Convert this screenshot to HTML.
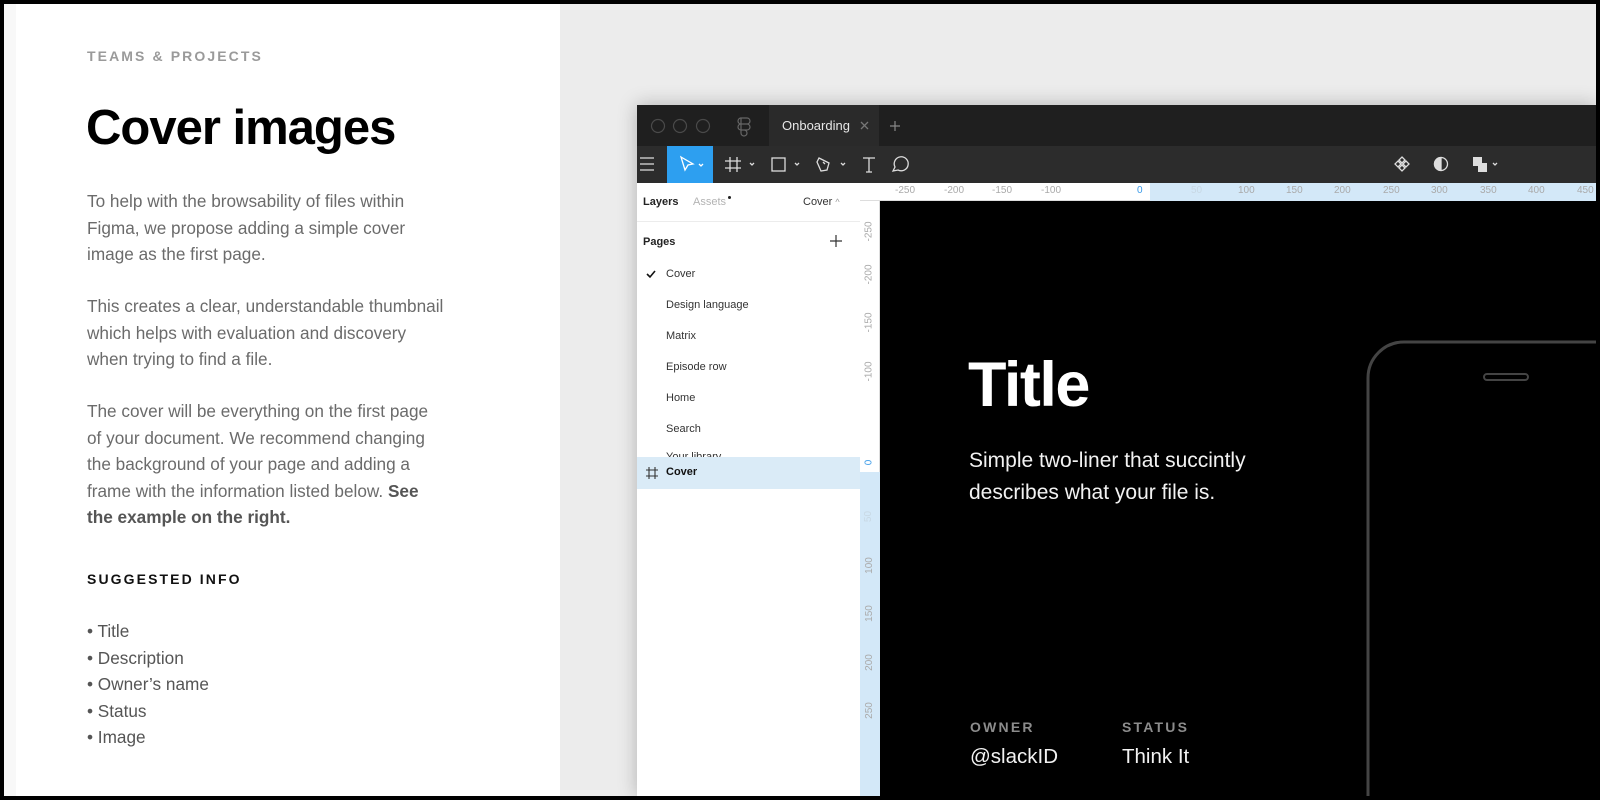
<!DOCTYPE html>
<html><head><meta charset="utf-8"><style>
*{margin:0;padding:0;box-sizing:border-box}
body{width:1600px;height:800px;background:#000;position:relative;overflow:hidden;font-family:"Liberation Sans",sans-serif}
.abs{position:absolute;white-space:nowrap}
#left{position:absolute;left:4px;top:4px;width:556px;height:792px;background:#fff}
#right{position:absolute;left:560px;top:4px;width:1036px;height:792px;background:#ececec}
.p{position:absolute;left:87px;font-size:17.2px;color:#6b6b6b;line-height:26.5px;width:440px}
.b{font-size:17.2px;color:#555}
.win{position:absolute;left:637px;top:105px;width:959px;height:691px;background:#000;box-shadow:0 0 18px rgba(0,0,0,.25)}
.pg{position:absolute;left:666px;font-size:11px;color:#333}
.rl{position:absolute;font-size:10px;color:#aaa}
.rv{position:absolute;font-size:10px;color:#aaa;transform:rotate(-90deg);transform-origin:center}
</style></head><body>
<div id="left"><div style="position:absolute;left:0;top:0;width:12px;height:792px;background:#f8f8f8"></div></div>
<div id="right"></div>

<div class="abs" style="left:87px;top:48px;font-size:14px;font-weight:bold;color:#9a9a9a;letter-spacing:2.1px">TEAMS &amp; PROJECTS</div>
<div class="abs" style="left:86px;top:100px;font-size:49px;font-weight:bold;color:#000;letter-spacing:-1px">Cover images</div>
<div class="p" style="top:188px">To help with the browsability of files within<br>Figma, we propose adding a simple cover<br>image as the first page.</div>
<div class="p" style="top:293px">This creates a clear, understandable thumbnail<br>which helps with evaluation and discovery<br>when trying to find a file.</div>
<div class="p" style="top:398px">The cover will be everything on the first page<br>of your document. We recommend changing<br>the background of your page and adding a<br>frame with the information listed below. <b style="color:#555">See<br>the example on the right.</b></div>
<div class="abs" style="left:87px;top:571px;font-size:14px;font-weight:bold;color:#111;letter-spacing:2.1px">SUGGESTED INFO</div>
<div class="p b" style="top:618px">• Title<br>• Description<br>• Owner’s name<br>• Status<br>• Image</div>

<div class="win">
  <div style="position:absolute;left:0;top:0;width:959px;height:41px;background:#1f1f1f"></div>
  <div style="position:absolute;left:132px;top:0;width:110px;height:41px;background:#2a2a2a"></div>
  <svg style="position:absolute;left:0;top:0" width="280" height="41">
    <g fill="none" stroke="#4a4a4a" stroke-width="1.2"><circle cx="21" cy="21" r="6.5"/><circle cx="43" cy="21" r="6.5"/><circle cx="66" cy="21" r="6.5"/></g>
    <g fill="none" stroke="#666" stroke-width="1.2"><path d="M104 13h6a3 3 0 0 1 0 6h-6zM104 19h6a3 3 0 0 1 0 6h-6zM104 25h3a3 3 0 1 1-3 3zM110 19a3 3 0 1 1 0 6"/><path d="M104 13h0a3 3 0 0 0 0 6a3 3 0 0 0 0 6"/></g>
    <path d="M224 17l7 7M231 17l-7 7" stroke="#777" stroke-width="1.3"/>
    <path d="M258 16v10M253 21h10" stroke="#888" stroke-width="1.2"/>
  </svg>
  <div class="abs" style="left:145px;top:13px;font-size:13px;color:#e6e6e6">Onboarding</div>
  <div style="position:absolute;left:0;top:41px;width:959px;height:37px;background:#2c2c2c"></div>
  <div style="position:absolute;left:30px;top:41px;width:46px;height:37px;background:#2d9ff0"></div>
  <svg style="position:absolute;left:0;top:41px" width="959" height="37" fill="none" stroke="#ddd" stroke-width="1.3">
    <path d="M3 12h14M3 18h14M3 24h14"/>
    <path d="M44 11l12 7-5 1-3 5z" stroke="#fff"/><path d="M62 18l2 2 2-2" stroke="#fff"/>
    <path d="M93 11v15M100 11v15M88 15h16M88 22h16"/><path d="M113 17l2 2 2-2"/>
    <rect x="135" y="12" width="13" height="13"/><path d="M158 17l2 2 2-2"/>
    <path d="M182 12l10 5-2 7-6 1-4-9z M186 16l2 2"/><path d="M204 17l2 2 2-2"/>
    <path d="M226 12h12M232 12v14M229 26h6"/>
    <path d="M256 25l2-4a7 7 0 1 1 3 3z"/>
    <g transform="translate(765 18)"><path d="M0-7l3 3-3 3-3-3zM0 1l3 3-3 3-3-3zM-4-3l3 3-3 3-3-3zM4-3l3 3-3 3-3-3z"/></g>
    <circle cx="804" cy="18" r="6.5"/><path d="M804 11.5a6.5 6.5 0 0 0 0 13z" fill="#ddd"/>
    <path d="M836 11h9v6h5v9h-9v-6h-5z" fill="#ddd" stroke="none"/><path d="M856 17l2 2 2-2"/>
  </svg>
  <div style="position:absolute;left:0;top:78px;width:223px;height:613px;background:#fff"></div>
  <div style="position:absolute;left:0;top:116px;width:223px;height:1px;background:#ececec"></div>
  <div class="abs" style="left:6px;top:91px;font-size:11px;font-weight:bold;color:#222">Layers</div>
  <div class="abs" style="left:56px;top:91px;font-size:11px;color:#b3b3b3">Assets</div>
  <div style="position:absolute;left:91px;top:91px;width:3px;height:3px;border-radius:50%;background:#222"></div>
  <div class="abs" style="left:166px;top:91px;font-size:11px;color:#333">Cover <span style="color:#999;font-size:9px">^</span></div>
  <div class="abs" style="left:6px;top:131px;font-size:11px;font-weight:bold;color:#222">Pages</div>
  <svg style="position:absolute;left:192px;top:129px" width="14" height="14"><path d="M7 1v12M1 7h12" stroke="#333" stroke-width="1.2"/></svg>
  <svg style="position:absolute;left:9px;top:164px" width="10" height="10"><path d="M1 5l3 3 5-6" stroke="#111" stroke-width="1.6" fill="none"/></svg>
  <div class="pg" style="left:29px;top:163px">Cover</div>
  <div class="pg" style="left:29px;top:194px">Design language</div>
  <div class="pg" style="left:29px;top:225px">Matrix</div>
  <div class="pg" style="left:29px;top:256px">Episode row</div>
  <div class="pg" style="left:29px;top:287px">Home</div>
  <div class="pg" style="left:29px;top:318px">Search</div>
  <div style="position:absolute;left:29px;top:346px;height:6px;overflow:hidden;font-size:11px;color:#333;width:100px;line-height:13px">Your library</div>
  <div style="position:absolute;left:0;top:352px;width:223px;height:32px;background:#daebf7"></div>
  <svg style="position:absolute;left:8px;top:361px" width="14" height="14"><path d="M4 1v12M10 1v12M1 4h12M1 10h12" stroke="#333" stroke-width="1.1"/></svg>
  <div class="abs" style="left:29px;top:361px;font-size:11px;font-weight:bold;color:#111">Cover</div>
  <div style="position:absolute;left:223px;top:78px;width:736px;height:18px;background:#fff;border-bottom:1px solid #ddd"></div>
  <div style="position:absolute;left:513px;top:78px;width:446px;height:18px;background:#d3e8f8"></div>
  <div style="position:absolute;left:223px;top:96px;width:20px;height:595px;background:#fff;border-right:1px solid #ddd"></div>
  <div style="position:absolute;left:223px;top:367px;width:20px;height:324px;background:#d3e8f8"></div>
  <div class="rl" style="left:258px;top:80px">-250</div>
  <div class="rl" style="left:307px;top:80px">-200</div>
  <div class="rl" style="left:355px;top:80px">-150</div>
  <div class="rl" style="left:404px;top:80px">-100</div>
  <div class="rl" style="left:500px;top:80px;color:#3a9ae8">0</div>
  <div class="rl" style="left:554px;top:80px;color:#c8d8e4">50</div>
  <div class="rl" style="left:601px;top:80px">100</div>
  <div class="rl" style="left:649px;top:80px">150</div>
  <div class="rl" style="left:697px;top:80px">200</div>
  <div class="rl" style="left:746px;top:80px">250</div>
  <div class="rl" style="left:794px;top:80px">300</div>
  <div class="rl" style="left:843px;top:80px">350</div>
  <div class="rl" style="left:891px;top:80px">400</div>
  <div class="rl" style="left:940px;top:80px">450</div>
  <div class="rv" style="left:222px;top:121px">-250</div>
  <div class="rv" style="left:222px;top:164px">-200</div>
  <div class="rv" style="left:222px;top:212px">-150</div>
  <div class="rv" style="left:222px;top:261px">-100</div>
  <div class="rv" style="left:229px;top:352px;color:#3a9ae8">0</div>
  <div class="rv" style="left:226px;top:406px;color:#c8d8e4">50</div>
  <div class="rv" style="left:224px;top:455px">100</div>
  <div class="rv" style="left:224px;top:503px">150</div>
  <div class="rv" style="left:224px;top:552px">200</div>
  <div class="rv" style="left:224px;top:600px">250</div>
  <div class="abs" style="left:331px;top:244px;font-size:63px;font-weight:bold;color:#fff;letter-spacing:-1.5px">Title</div>
  <div class="abs" style="left:332px;top:340px;font-size:21px;color:#f2f2f2;line-height:32px">Simple two-liner that succintly<br>describes what your file is.</div>
  <div class="abs" style="left:333px;top:614px;font-size:14px;font-weight:bold;color:#8c8c8c;letter-spacing:2.2px">OWNER</div>
  <div class="abs" style="left:485px;top:614px;font-size:14px;font-weight:bold;color:#8c8c8c;letter-spacing:2.2px">STATUS</div>
  <div class="abs" style="left:333px;top:640px;font-size:20.5px;color:#f2f2f2">@slackID</div>
  <div class="abs" style="left:485px;top:640px;font-size:20.5px;color:#f2f2f2">Think It</div>
  <svg style="position:absolute;left:700px;top:220px" width="259" height="471" fill="none" stroke="#444" stroke-width="3">
    <path d="M31 471V53a36 36 0 0 1 36-36H270"/>
    <rect x="147" y="49" width="44" height="6" rx="3" stroke-width="2"/>
  </svg>
</div>
</body></html>
